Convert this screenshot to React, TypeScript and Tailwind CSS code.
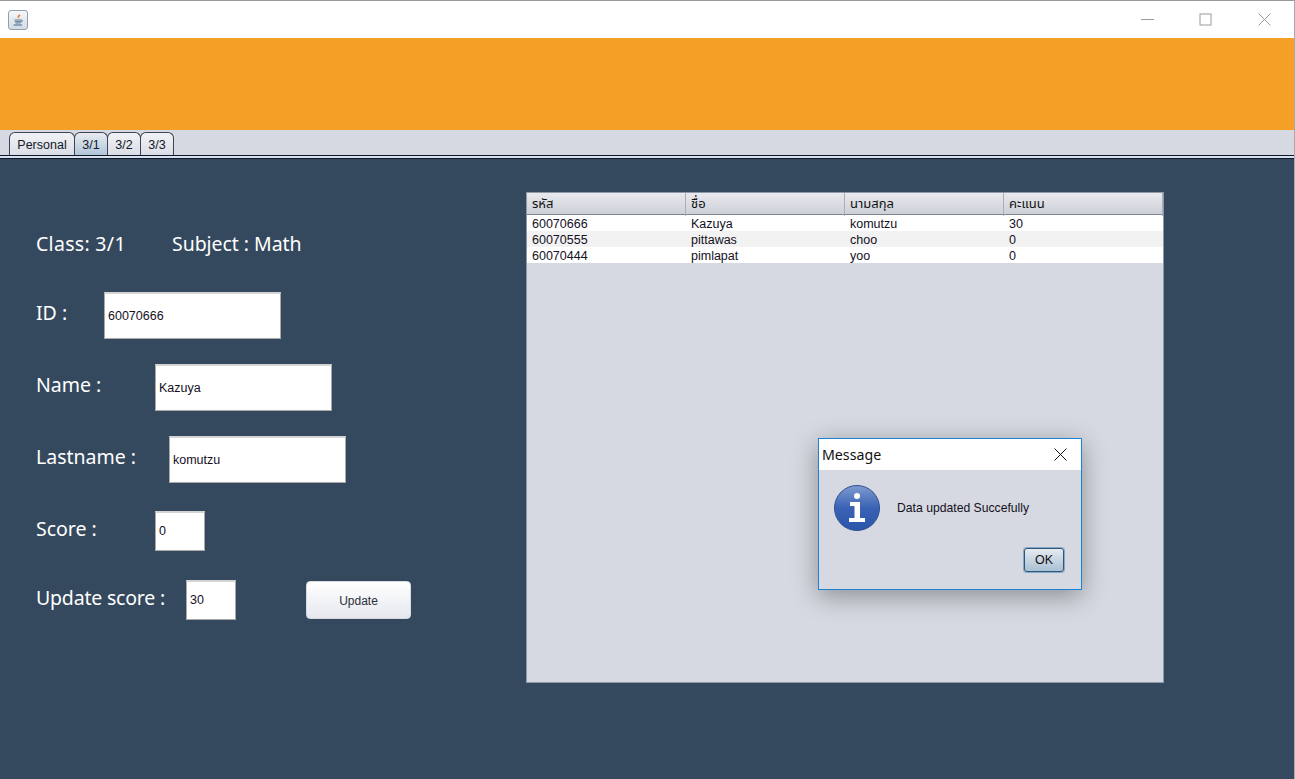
import React from "react";

const sans = { fontFamily: '"Liberation Sans", Arial, sans-serif' };
const noto = { fontFamily: '"Noto Sans", sans-serif' };

function JavaIcon() {
  return (
    <div className="w-[20px] h-[20px] rounded-[3px] border border-[#8fa0b0] bg-gradient-to-b from-[#f6f8fa] to-[#d3dae3] flex items-center justify-center">
      <svg width="16" height="16" viewBox="0 0 16 16" fill="none">
        <path d="M8.6 1.500c1 1.400-1.600 2.400-1 4 .2.600.7 1 1 1.300-.3-1 .2-1.700 1-2.400.8-.7 1-1.400.6-2-.1.700-.8 1-1.600-.9z" fill="#e8792c" />
        <path d="M4.500 8h7M4.800 9.600h6.200M5.500 11h5" stroke="#5b7a9a" strokeWidth="1" />
        <path d="M11.200 8.200c1.800-.4 2 1.600-.5 2.200" stroke="#5b7a9a" strokeWidth=".9" />
        <path d="M3.500 13h8.500" stroke="#5b7a9a" strokeWidth="1.200" />
      </svg>
    </div>
  );
}

function TitleBar() {
  return (
    <div className="h-[38px] bg-white border-t border-[#999999] flex items-center justify-between pl-[8px] shrink-0">
      <JavaIcon />
      <div className="flex items-center mr-[2px] -mt-px">
        <div className="w-[58px] flex justify-center">
          <svg width="13" height="13" viewBox="0 0 13 13">
            <path d="M0 6.500h13" stroke="#9a9a9a" strokeWidth="1" />
          </svg>
        </div>
        <div className="w-[59px] flex justify-center">
          <svg width="13" height="13" viewBox="0 0 13 13">
            <rect x="1" y="1" width="11" height="11" fill="none" stroke="#9a9a9a" strokeWidth="1" />
          </svg>
        </div>
        <div className="w-[58px] flex justify-center">
          <svg width="13" height="13" viewBox="0 0 13 13">
            <path d="M.5.500l12 12M12.500.500l-12 12" stroke="#9a9a9a" strokeWidth="1" />
          </svg>
        </div>
      </div>
    </div>
  );
}

function Tab({ label, active, w }: { label: string; active?: boolean; w: string }) {
  return (
    <div
      className={`${w} h-[23px] -mr-px pt-[2px] rounded-t-[6px] border border-b-0 border-[#3c4558] flex items-center justify-center text-[12.5px] text-[#111827] ${
        active ? "bg-gradient-to-b from-[#e8ebf0] to-[#b0c6d9]" : "bg-gradient-to-b from-[#f1f2f5] to-[#dcdee6]"
      }`}
      style={sans}
    >
      {label}
    </div>
  );
}

function Tabs() {
  return (
    <div className="bg-[#d6d9e1] shrink-0">
      <div className="h-[25px] flex items-end pl-[9px]">
        <Tab label="Personal" w="w-[66px]" />
        <Tab label="3/1" active w="w-[34px]" />
        <Tab label="3/2" w="w-[34px]" />
        <Tab label="3/3" w="w-[34px]" />
      </div>
      <div className="h-[4px] border-y border-[#10182c] bg-[#d9e1ee]" />
    </div>
  );
}

function Field({ value, w, h }: { value: string; w: string; h: string }) {
  return (
    <div
      className={`${w} ${h} shrink-0 bg-white border border-[#a9a9a9] border-t-2 border-t-[#d4d4d4] flex items-center pl-[3px] text-[12.5px] text-[#14101e]`}
      style={sans}
    >
      {value}
    </div>
  );
}

function Label({ text, w, extra = "" }: { text: string; w: string; extra?: string }) {
  return (
    <div className={`${w} ${extra} shrink-0 text-[19.5px] leading-[26px] text-white -mt-[5px]`} style={noto}>
      {text}
    </div>
  );
}

function Form() {
  return (
    <div className="w-[526px] shrink-0 pl-[36px] pt-[71px]">
      <div className="flex h-[28px] items-center text-[19.5px] text-white" style={noto}>
        <span className="w-[136px] tracking-[0.3px]">Class: 3/1</span>
        <span className="-tracking-[0.05px]">Subject : Math</span>
      </div>
      <div className="flex items-center mt-[34px]">
        <Label text="ID :" w="w-[68px]" />
        <Field value="60070666" w="w-[177px]" h="h-[47px]" />
      </div>
      <div className="flex items-center mt-[25px]">
        <Label text="Name :" w="w-[119px]" />
        <Field value="Kazuya" w="w-[177px]" h="h-[47px]" />
      </div>
      <div className="flex items-center mt-[25px]">
        <Label text="Lastname :" w="w-[133px]" />
        <Field value="komutzu" w="w-[177px]" h="h-[47px]" />
      </div>
      <div className="flex items-center mt-[28px]">
        <Label text="Score :" w="w-[119px]" />
        <Field value="0" w="w-[50px]" h="h-[40px]" />
      </div>
      <div className="flex items-center mt-[29px]">
        <Label text="Update score :" w="w-[150px]" extra="-tracking-[0.2px]" />
        <Field value="30" w="w-[50px]" h="h-[40px]" />
        <button
          className="ml-[70px] w-[105px] h-[38px] pt-[2px] rounded-[4px] bg-gradient-to-b from-white to-[#e6e8ef] border border-[#d8dae0] text-[12px] text-[#2c3038] flex items-center justify-center"
          style={sans}
        >
          Update
        </button>
      </div>
    </div>
  );
}

const rows = [
  ["60070666", "Kazuya", "komutzu", "30"],
  ["60070555", "pittawas", "choo", "0"],
  ["60070444", "pimlapat", "yoo", "0"],
];
const headers = ["รหัส", "ชื่อ", "นามสกุล", "คะแนน"];

function Table() {
  return (
    <div className="w-[638px] h-[491px] mt-[33px] bg-[#d6d9e1] border border-[#8f98a6] shrink-0 self-start" style={sans}>
      <div className="grid grid-cols-[159px_159px_159px_159px] h-[22px] bg-gradient-to-b from-[#e9eaee] to-[#cdd0d8] border-b border-[#7d8490]">
        {headers.map((h) => (
          <div
            key={h}
            className="pl-[5px] border-r border-[#a9aeb8] text-[13px] leading-[23px] text-[#111]"
            style={{ fontFamily: '"Noto Sans Thai", "Noto Sans", "DejaVu Sans", sans-serif' }}
          >
            {h}
          </div>
        ))}
      </div>
      {rows.map((r, i) => (
        <div key={r[0]} className={`grid grid-cols-[159px_159px_159px_159px] h-[16px] ${i === 1 ? "bg-[#f2f2f2]" : "bg-white"}`}>
          {r.map((c, j) => (
            <div key={j} className="pl-[5px] text-[12.5px] leading-[18px] text-[#14101e]">
              {c}
            </div>
          ))}
        </div>
      ))}
    </div>
  );
}

function InfoIcon() {
  return (
    <svg width="48" height="48" viewBox="0 0 48 48">
      <defs>
        <linearGradient id="infoG" x1="0" y1="0" x2="0" y2="1">
          <stop offset="0" stopColor="#7f9bd0" />
          <stop offset="0.5" stopColor="#3a62b4" />
          <stop offset="1" stopColor="#2a55a8" />
        </linearGradient>
      </defs>
      <circle cx="24" cy="24" r="22.500" fill="url(#infoG)" stroke="#2d4f93" strokeWidth="1" />
      <circle cx="24" cy="12" r="3" fill="#fff" />
      <path d="M17 18h10v16h5v4H16v-4h5.500V22H17z" fill="#fff" />
    </svg>
  );
}

function Dialog() {
  return (
    <div
      className="absolute left-[818px] top-[438px] w-[264px] h-[152px] bg-[#d6d9e1] border border-[#1a83d6] shadow-[0_6px_24px_rgba(0,0,0,0.35)]"
      style={sans}
    >
      <div className="h-[31px] bg-white flex items-center justify-between pl-[3px] pr-[14px]">
        <span className="text-[14.2px] text-[#111]" style={noto}>
          Message
        </span>
        <svg width="13" height="13" viewBox="0 0 13 13">
          <path d="M.5.500l12 12M12.500.500l-12 12" stroke="#111" strokeWidth="1" />
        </svg>
      </div>
      <div className="flex items-center pl-[14px] pt-[14px]">
        <InfoIcon />
        <span className="ml-[16px] text-[12.2px] text-[#14101e]">Data updated Succefully</span>
      </div>
      <div className="flex justify-end pr-[17px] pt-[16px]">
        <button className="w-[40px] h-[24px] rounded-[3px] border border-[#2f5578] shadow-[0_0_0_1px_#86a8c8] bg-gradient-to-b from-[#e6ebf0] to-[#a9c0d4] text-[12.5px] text-[#111] flex items-center justify-center">
          OK
        </button>
      </div>
    </div>
  );
}

export default function App() {
  return (
    <div className="relative w-[1295px] h-[779px] overflow-hidden flex flex-col bg-[#35495e]">
      <TitleBar />
      <div className="h-[92px] bg-[#f49f25] shrink-0" />
      <Tabs />
      <div className="flex-1 flex">
        <Form />
        <Table />
      </div>
      <Dialog />
      <div className="absolute right-0 top-0 bottom-0 w-px bg-[#a9a9a9]" />
    </div>
  );
}
